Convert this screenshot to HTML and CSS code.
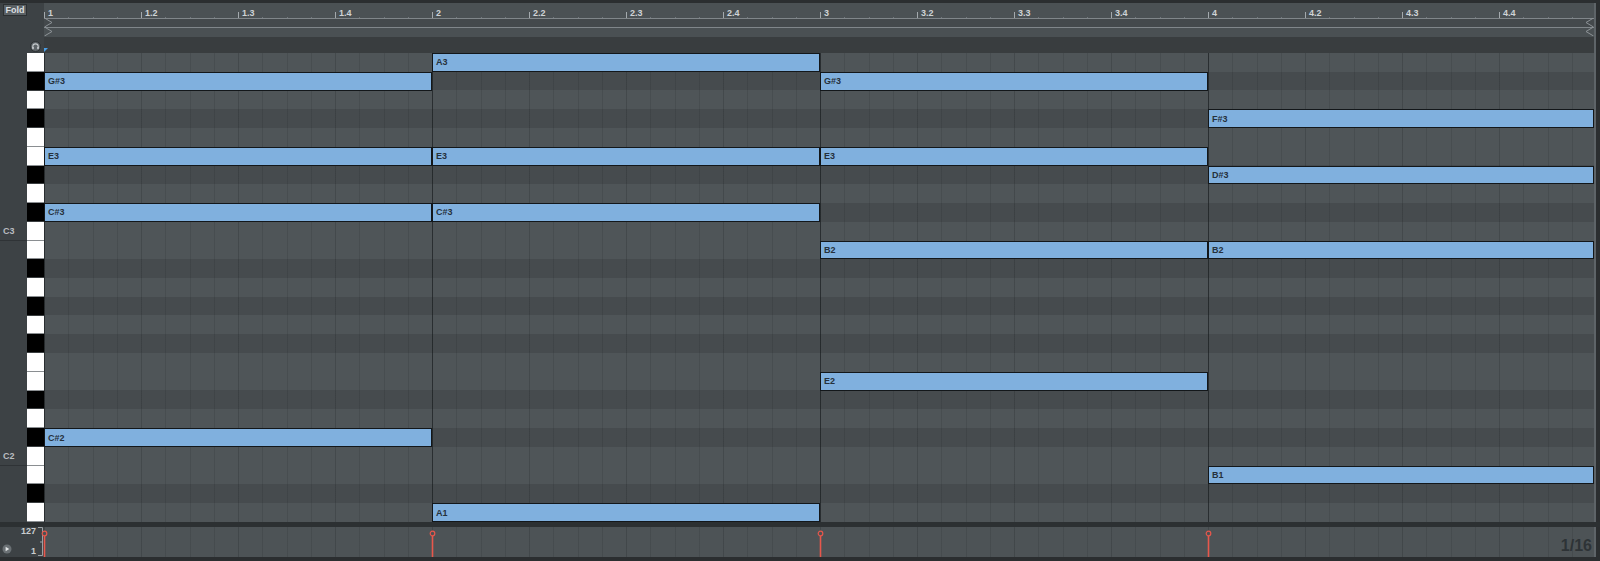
FILE: index.html
```html
<!DOCTYPE html>
<html>
<head>
<meta charset="utf-8">
<title>MIDI Editor</title>
<link rel="stylesheet" href="styles.css">
</head>
<body>
<div class="editor">
  <div class="strip"></div>

  <div class="head">
    <div class="head-left"><span class="fold">Fold</span></div>
    <div class="head-main">
      <div class="ruler">
        <div class="beat"><span>1</span></div>
        <div class="beat"><span>1.2</span></div>
        <div class="beat"><span>1.3</span></div>
        <div class="beat"><span>1.4</span></div>
        <div class="beat"><span>2</span></div>
        <div class="beat"><span>2.2</span></div>
        <div class="beat"><span>2.3</span></div>
        <div class="beat"><span>2.4</span></div>
        <div class="beat"><span>3</span></div>
        <div class="beat"><span>3.2</span></div>
        <div class="beat"><span>3.3</span></div>
        <div class="beat"><span>3.4</span></div>
        <div class="beat"><span>4</span></div>
        <div class="beat"><span>4.2</span></div>
        <div class="beat"><span>4.3</span></div>
        <div class="beat"><span>4.4</span></div>
      </div>
      <div class="loop loop-a">
        <svg class="tri" width="9" height="9" viewBox="0 0 9 9"><path d="M0.5 0 L8 4.5 L0.5 9" fill="none" stroke="#8d9397" stroke-width="1"/></svg>
        <svg class="tri" width="9" height="9" viewBox="0 0 9 9"><path d="M8.5 0 L1 4.5 L8.5 9" fill="none" stroke="#8d9397" stroke-width="1"/></svg>
      </div>
      <div class="loop loop-b">
        <svg class="tri" width="9" height="9" viewBox="0 0 9 9"><path d="M0.5 0 L8 4.5 L0.5 9" fill="none" stroke="#8d9397" stroke-width="1"/></svg>
        <svg class="tri" width="9" height="9" viewBox="0 0 9 9"><path d="M8.5 0 L1 4.5 L8.5 9" fill="none" stroke="#8d9397" stroke-width="1"/></svg>
      </div>
    </div>
    <div class="edge"></div>
  </div>

  <div class="band">
    <div class="band-left">
      <svg width="11" height="11" viewBox="0 0 11 11">
        <circle cx="5.5" cy="5.5" r="5" fill="#5d6367" stroke="#2e3234" stroke-width="1"/>
        <path d="M2.8 7 V5.6 A2.7 2.7 0 0 1 8.2 5.6 V7" fill="none" stroke="#c5c9cc" stroke-width="1.1"/>
        <rect x="2.2" y="6" width="1.6" height="2.2" fill="#c5c9cc"/>
        <rect x="7.2" y="6" width="1.6" height="2.2" fill="#c5c9cc"/>
      </svg>
    </div>
    <div class="band-main">
      <svg class="corner" width="4" height="4" viewBox="0 0 4 4"><path d="M0 0 H4 L0 4 Z" fill="#4a9ee6"/></svg>
    </div>
    <div class="edge"></div>
  </div>

  <div class="roll">
    <div class="labels">
      <div class="oct oct-c3">C3</div>
      <div class="oct oct-c2">C2</div>
    </div>
    <div class="keys">
      <div class="key w"></div><div class="key b"></div><div class="key w"></div><div class="key b"></div>
      <div class="key w"></div><div class="key w"></div><div class="key b"></div><div class="key w"></div>
      <div class="key b"></div><div class="key w"></div><div class="key w"></div><div class="key b"></div>
      <div class="key w"></div><div class="key b"></div><div class="key w"></div><div class="key b"></div>
      <div class="key w"></div><div class="key w"></div><div class="key b"></div><div class="key w"></div>
      <div class="key b"></div><div class="key w"></div><div class="key w"></div><div class="key b"></div>
      <div class="key w"></div>
    </div>
    <div class="notes">
      <div class="note" style="grid-area: 1 / 2">A3</div>
      <div class="note" style="grid-area: 2 / 1">G#3</div>
      <div class="note" style="grid-area: 2 / 3">G#3</div>
      <div class="note" style="grid-area: 4 / 4">F#3</div>
      <div class="note" style="grid-area: 6 / 1">E3</div>
      <div class="note" style="grid-area: 6 / 2">E3</div>
      <div class="note" style="grid-area: 6 / 3">E3</div>
      <div class="note" style="grid-area: 7 / 4">D#3</div>
      <div class="note" style="grid-area: 9 / 1">C#3</div>
      <div class="note" style="grid-area: 9 / 2">C#3</div>
      <div class="note" style="grid-area: 11 / 3">B2</div>
      <div class="note" style="grid-area: 11 / 4">B2</div>
      <div class="note" style="grid-area: 18 / 3">E2</div>
      <div class="note" style="grid-area: 21 / 1">C#2</div>
      <div class="note" style="grid-area: 23 / 4">B1</div>
      <div class="note" style="grid-area: 25 / 2">A1</div>
    </div>
    <div class="edge"></div>
  </div>

  <div class="sep"></div>

  <div class="vel">
    <div class="vel-left">
      <div class="vel-play">
        <svg width="10" height="10" viewBox="0 0 10 10"><circle cx="5" cy="5" r="4.5" fill="#6a7074"/><path d="M3.6 2.8 L7.2 5 L3.6 7.2 Z" fill="#e4e7e9"/></svg>
      </div>
      <div class="vel-nums"><span>127</span><span>1</span></div>
      <svg class="bracket" width="7" height="30" viewBox="0 0 7 30"><path d="M1 0.5 H5.5 V28.5 H1 M3 15 H5.5" fill="none" stroke="#9aa0a4" stroke-width="1"/></svg>
    </div>
    <div class="vel-main">
      <div class="vcell"><svg class="stem" width="7" height="30" viewBox="0 0 7 30"><circle cx="3.5" cy="6.5" r="2.3" fill="#4b5154" stroke="#e8574c" stroke-width="1.2"/><line x1="3.5" y1="8.8" x2="3.5" y2="30" stroke="#e8574c" stroke-width="1.6"/></svg></div>
      <div class="vcell"><svg class="stem" width="7" height="30" viewBox="0 0 7 30"><circle cx="3.5" cy="6.5" r="2.3" fill="#4b5154" stroke="#e8574c" stroke-width="1.2"/><line x1="3.5" y1="8.8" x2="3.5" y2="30" stroke="#e8574c" stroke-width="1.6"/></svg></div>
      <div class="vcell"><svg class="stem" width="7" height="30" viewBox="0 0 7 30"><circle cx="3.5" cy="6.5" r="2.3" fill="#4b5154" stroke="#e8574c" stroke-width="1.2"/><line x1="3.5" y1="8.8" x2="3.5" y2="30" stroke="#e8574c" stroke-width="1.6"/></svg></div>
      <div class="vcell last"><svg class="stem" width="7" height="30" viewBox="0 0 7 30"><circle cx="3.5" cy="6.5" r="2.3" fill="#4b5154" stroke="#e8574c" stroke-width="1.2"/><line x1="3.5" y1="8.8" x2="3.5" y2="30" stroke="#e8574c" stroke-width="1.6"/></svg><span class="grid-size">1/16</span></div>
    </div>
    <div class="edge"></div>
  </div>

  <div class="strip bottom"></div>
</div>
</body>
</html>
```

FILE: styles.css
```css
* { box-sizing: border-box; }

html, body {
  margin: 0;
  padding: 0;
  background: #2b2e30;
}

body {
  font-family: "Liberation Sans", Arial, sans-serif;
  font-weight: bold;
  width: 1600px;
  height: 561px;
  overflow: hidden;
}

.editor {
  display: flex;
  flex-direction: column;
  width: 1600px;
  height: 561px;
}

.strip {
  height: 3px;
  background: #2b2e30;
  flex: none;
}

.strip.bottom {
  height: 4px;
}

.head, .band, .roll, .vel {
  display: grid;
  grid-template-columns: 44px 1550px 6px;
  flex: none;
}

.edge {
  background: #2b2e30;
  border-left: 2px solid #5e6468;
}

/* ---------- header ---------- */
.head {
  height: 34px;
}

.head-left {
  background: #3d4245;
  padding: 1px 0 0 3px;
}

.fold {
  display: block;
  width: 24px;
  height: 12px;
  background: #5a6064;
  border: 1px solid #2c3032;
  color: #dadee0;
  font-size: 9px;
  line-height: 10px;
  text-align: center;
}

.head-main {
  display: flex;
  flex-direction: column;
  background: #4b5154;
}

.ruler {
  height: 15px;
  display: grid;
  grid-template-columns: repeat(15, 97px) 95px;
  background-image: repeating-linear-gradient(to right, #6f757a 0 1px, transparent 1px 24.25px);
  background-size: 100% 1px;
  background-position: 0 14px;
  background-repeat: no-repeat;
}

.beat {
  background-image: linear-gradient(#a3a9ad, #a3a9ad);
  background-size: 1px 6px;
  background-position: 0 9px;
  background-repeat: no-repeat;
}

.beat span {
  display: block;
  padding: 6px 0 0 4px;
  font-size: 9px;
  line-height: 9px;
  color: #cfd3d6;
}

.loop {
  display: flex;
  justify-content: space-between;
  align-items: flex-start;
  border-top: 1px solid #80868a;
}

.loop-a {
  height: 9px;
  background: #44494c;
}

.loop-b {
  height: 10px;
  background: #4a5053;
}

.tri {
  display: block;
  margin-top: -1px;
}

/* ---------- band ---------- */
.band {
  height: 16px;
}

.band-left {
  background: #3d4245;
  display: flex;
  justify-content: flex-end;
  align-items: center;
  padding: 2px 3px 0 0;
}

.band-left svg {
  display: block;
}

.band-main {
  background: #393d3f;
  display: flex;
  align-items: flex-end;
}

.corner {
  display: block;
  margin-bottom: 1px;
}

/* ---------- piano roll ---------- */
.roll {
  height: 469px;
  grid-template-columns: 27px 17px 1550px 6px;
}

.labels {
  background: #3d4245;
  display: grid;
  grid-template-rows: repeat(25, 1fr);
}

.oct {
  font-size: 9px;
  color: #b9bdc0;
  padding-left: 3px;
  display: flex;
  align-items: center;
  border-bottom: 1px solid #2f3336;
}

.oct-c3 { grid-row: 10; }
.oct-c2 { grid-row: 22; }

.keys {
  display: grid;
  grid-template-rows: repeat(25, 1fr);
  background: #3d4245;
}

.key {
  border-bottom: 1px solid #8a8e91;
}

.key.w { background: #ffffff; }
.key.b { background: #000000; border-bottom-color: #3a3e40; }

.notes {
  display: grid;
  grid-template-columns: 388px 388px 388px 386px;
  grid-template-rows: repeat(25, 1fr);
  background-color: #4f5558;
  background-image:
    repeating-linear-gradient(to right, rgba(20, 24, 26, 0.55) 0 1px, transparent 1px 388px),
    repeating-linear-gradient(to right, rgba(20, 24, 26, 0.08) 0 1px, transparent 1px 97px),
    repeating-linear-gradient(to right, rgba(20, 24, 26, 0.13) 0 1px, transparent 1px 24.25px),
    repeating-linear-gradient(to bottom,
      #4f5558 0 18.75px,
      #464b4e 18.75px 37.5px,
      #4f5558 37.5px 56.25px,
      #464b4e 56.25px 75px,
      #4f5558 75px 112.5px,
      #464b4e 112.5px 131.25px,
      #4f5558 131.25px 150px,
      #464b4e 150px 168.75px,
      #4f5558 168.75px 206.25px,
      #464b4e 206.25px 225px);
}

.note {
  background: #80b0de;
  border: 1px solid #13171a;
  color: #26313b;
  font-size: 9px;
  padding-left: 3px;
  display: flex;
  align-items: center;
  white-space: nowrap;
  overflow: hidden;
}

/* ---------- separator & velocity ---------- */
.sep {
  height: 5px;
  background: #2c3032;
  flex: none;
}

.vel {
  height: 30px;
}

.vel-left {
  background: #3d4245;
  display: flex;
  align-items: stretch;
}

.vel-play {
  width: 22px;
  display: flex;
  align-items: flex-end;
  padding: 0 0 3px 2px;
}

.vel-play svg { display: block; }

.vel-nums {
  width: 14px;
  display: flex;
  flex-direction: column;
  justify-content: space-between;
  align-items: flex-end;
  font-size: 9px;
  line-height: 9px;
  color: #c9cdd0;
  padding: 0 0 1px 0;
}

.bracket {
  display: block;
  margin-left: 1px;
}

.vel-main {
  display: grid;
  grid-template-columns: 388px 388px 388px 386px;
  background-color: #4d5356;
  background-image:
    repeating-linear-gradient(to right, rgba(20, 24, 26, 0.08) 0 1px, transparent 1px 97px),
    repeating-linear-gradient(to right, rgba(20, 24, 26, 0.13) 0 1px, transparent 1px 24.25px);
}

.vcell {
  display: flex;
  align-items: stretch;
}

.vcell.last {
  justify-content: space-between;
  align-items: flex-end;
}

.stem {
  display: block;
  margin-left: -3px;
  align-self: stretch;
}

.grid-size {
  font-size: 16px;
  line-height: 16px;
  color: #2e3336;
  padding: 0 2px 3px 0;
}
```
